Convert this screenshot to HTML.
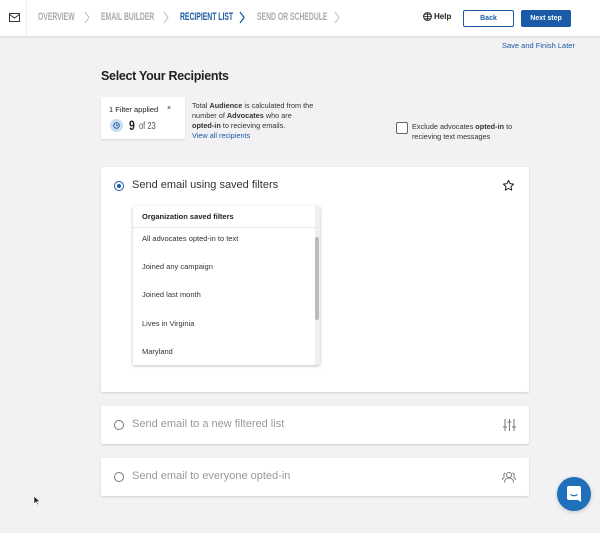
<!DOCTYPE html>
<html><head><style>
*{box-sizing:border-box;margin:0;padding:0}
body{width:600px;height:533px;background:#f2f2f4;font-family:"Liberation Sans",sans-serif;position:relative;overflow:hidden;color:#222}
.a{position:absolute;white-space:nowrap}
.nav{font-size:11px;font-weight:bold;color:#aaa;top:11px;transform:scaleX(.62);transform-origin:0 0}
.card{position:absolute;left:101px;width:428px;background:#fff;box-shadow:0 1px 2px rgba(0,0,0,.15);border-radius:2px}
.radio{position:absolute;width:10px;height:10px;border:1px solid #666;border-radius:50%}
.it{position:absolute;left:9px;font-size:7.5px;color:#333}
</style></head><body>
<div class="a" style="left:0;top:0;width:600px;height:36px;background:#fff;box-shadow:0 1px 3px rgba(0,0,0,.1)"></div>
<svg class="a" style="left:9px;top:13px" width="11" height="9" viewBox="0 0 11 9"><rect x=".5" y=".5" width="10" height="8" fill="none" stroke="#333"/><path d="M.5 1.5 5.5 5 10.5 1.5" fill="none" stroke="#333"/></svg>
<div class="a" style="left:26px;top:0;width:1px;height:36px;background:#eee"></div>
<div class="a nav" style="left:38px">OVERVIEW</div>
<div class="a nav" style="left:101px">EMAIL BUILDER</div>
<div class="a nav" style="left:180px;color:#1a5aa6">RECIPIENT LIST</div>
<div class="a nav" style="left:257px">SEND OR SCHEDULE</div>
<svg class="a" style="left:0;top:0" width="400" height="36"><g fill="none" stroke-width="1"><path d="M85 12l4 5.5-4 5.5M164 12l4 5.5-4 5.5M335 12l4 5.5-4 5.5" stroke="#bbb"/><path d="M240 12l4 5.5-4 5.5" stroke="#1a5aa6" stroke-width="1.3"/></g></svg>
<svg class="a" style="left:423px;top:12px" width="9" height="9" viewBox="0 0 10 10"><circle cx="5" cy="5" r="4.3" fill="none" stroke="#222" stroke-width="1.2"/><path d="M5 .7v8.6M.7 5h8.6M2 2.5h6M2 7.5h6" stroke="#222" stroke-width=".9" fill="none"/></svg>
<div class="a" style="left:434px;top:12px;font-size:8px;font-weight:bold">Help</div>
<div class="a" style="left:463px;top:10px;width:51px;height:17px;border:1px solid #1a5aa6;border-radius:2px;background:#fff;font-size:7px;font-weight:bold;color:#1a5aa6;text-align:center;line-height:15px">Back</div>
<div class="a" style="left:521px;top:10px;width:50px;height:17px;background:#1a5aa6;border-radius:2px;font-size:7px;font-weight:bold;color:#fff;text-align:center;line-height:17px">Next step</div>
<div class="a" style="left:502px;top:41px;font-size:7.5px;color:#1a5aa6">Save and Finish Later</div>
<div class="a" style="left:101px;top:69px;font-size:12.5px;font-weight:bold;letter-spacing:-0.3px">Select Your Recipients</div>
<div class="a" style="left:101px;top:97px;width:84px;height:42px;background:#fff;box-shadow:0 1px 2px rgba(0,0,0,.1)"></div>
<div class="a" style="left:109px;top:105px;font-size:7.5px">1 Filter applied</div>
<div class="a" style="left:167px;top:105px;font-size:7px">×</div>
<div class="a" style="left:110px;top:119px;width:13px;height:13px;border-radius:50%;background:#c8dcf2"></div>
<svg class="a" style="left:113px;top:122px" width="7" height="7" viewBox="0 0 7 7"><circle cx="3.5" cy="3.5" r="2.8" fill="none" stroke="#1a5aa6" stroke-width=".9"/><path d="M3.5 1.7v1.8h1.5" fill="none" stroke="#1a5aa6" stroke-width=".8"/></svg>
<div class="a" style="left:129px;top:117px;font-size:14px;font-weight:bold;transform:scaleX(.75);transform-origin:0 0">9</div>
<div class="a" style="left:139px;top:121px;font-size:10px;color:#555;transform:scaleX(.75);transform-origin:0 0">of 23</div>
<div class="a" style="left:192px;top:101px;font-size:7.3px;line-height:10px;color:#333">Total <b>Audience</b> is calculated from the<br>number of <b>Advocates</b> who are<br><b>opted-in</b> to recieving emails.<br><span style="color:#1a5aa6">View all recipients</span></div>
<div class="a" style="left:396px;top:122px;width:12px;height:12px;border:1px solid #666;border-radius:2px;background:#fff"></div>
<div class="a" style="left:412px;top:122px;font-size:7.3px;line-height:10px;color:#333">Exclude advocates <b>opted-in</b> to<br>recieving text messages</div>
<div class="card" style="top:167px;height:225px">
<div class="radio" style="left:13px;top:14px;border-color:#1a5aa6"><div style="position:absolute;left:2px;top:2px;width:4px;height:4px;border-radius:50%;background:#1a5aa6"></div></div>
<div class="a" style="left:31px;top:12px;font-size:11px;color:#333">Send email using saved filters</div>
<svg class="a" style="left:401px;top:12px" width="13" height="13" viewBox="0 0 24 24"><path d="M12 2.5l2.9 6.1 6.6.8-4.9 4.6 1.3 6.6L12 17.3l-5.9 3.3 1.3-6.6-4.9-4.6 6.6-.8z" fill="none" stroke="#222" stroke-width="1.8" stroke-linejoin="round"/></svg>
<div class="a" style="left:32px;top:39px;width:187px;height:159px;background:#fff;box-shadow:0 1px 3px rgba(0,0,0,.25);border-radius:2px;overflow:hidden">
<div class="it" style="top:6px;font-weight:bold;color:#222">Organization saved filters</div>
<div style="position:absolute;left:0;top:21px;width:182px;height:1px;background:#e6e6e6"></div>
<div class="it" style="top:28px">All advocates opted-in to text</div>
<div class="it" style="top:56px">Joined any campaign</div>
<div class="it" style="top:84px">Joined last month</div>
<div class="it" style="top:113px">Lives in Virginia</div>
<div class="it" style="top:141px">Maryland</div>
<div style="position:absolute;left:182px;top:0;width:5px;height:159px;background:#f0f0f0"></div>
<div style="position:absolute;left:182px;top:31px;width:4px;height:83px;background:#bbb;border-radius:2px"></div>
</div></div>
<div class="card" style="top:406px;height:38px">
<div class="radio" style="left:13px;top:14px;border-color:#777"></div>
<div class="a" style="left:31px;top:12px;font-size:11px;color:#999">Send email to a new filtered list</div>
<svg class="a" style="left:402px;top:13px" width="13" height="12" viewBox="0 0 13 12" stroke="#777" stroke-width="1" fill="none"><path d="M2 0v12M6.5 0v12M11 0v12M0 8h4M4.5 3h4M9 8h4"/></svg>
</div>
<div class="card" style="top:458px;height:38px">
<div class="radio" style="left:13px;top:14px;border-color:#777"></div>
<div class="a" style="left:31px;top:12px;font-size:11px;color:#999">Send email to everyone opted-in</div>
<svg class="a" style="left:401px;top:13px" width="14" height="12" viewBox="0 0 14 12" stroke="#777" stroke-width="1" fill="none"><circle cx="7" cy="4" r="2.5"/><path d="M2.5 11.5c0-3 2-4.5 4.5-4.5s4.5 1.5 4.5 4.5M3.5 2a2 2 0 0 0-1 3.5M10.5 2a2 2 0 0 1 1 3.5M0.5 9c0-1.5 1-2.5 2-2.8M13.5 9c0-1.5-1-2.5-2-2.8"/></svg>
</div>
<div class="a" style="left:557px;top:477px;width:34px;height:34px;border-radius:50%;background:#1f6fba;box-shadow:0 1px 4px rgba(0,0,0,.2)"></div>
<svg class="a" style="left:565px;top:485px" width="18" height="18" viewBox="0 0 18 18"><path d="M2 3a2 2 0 0 1 2-2h10a2 2 0 0 1 2 2v14l-3-2H4a2 2 0 0 1-2-2z" fill="#fff"/><path d="M5.5 9.5q3.5 2.5 7 0" stroke="#1f6fba" stroke-width="1.2" fill="none"/></svg>
<svg class="a" style="left:33px;top:495px" width="8" height="11" viewBox="0 0 8 11"><path d="M1 1v8l2-2 1.5 3 1-.5L4 6.5h3z" fill="#222" stroke="#fff" stroke-width=".6"/></svg>
</body></html>
